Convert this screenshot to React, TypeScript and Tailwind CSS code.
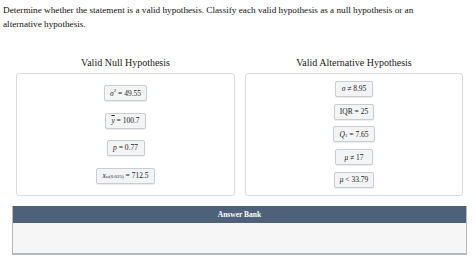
const serif = { fontFamily: '"Liberation Serif", "Times New Roman", serif' }

function Chip({ children, wide }: { children: React.ReactNode; wide?: boolean }) {
  return (
    <div
      className={`flex h-[16px] items-center justify-center rounded-[2px] border border-[#c9ccd0] bg-[#f3f4f6] px-[5px] text-[7.5px] leading-none text-[#222] shadow-[0_1px_1px_rgba(0,0,0,0.08)] ${wide ? 'min-w-[58px]' : 'min-w-[38px]'}`}
    >
      {children}
    </div>
  )
}

const nullItems = [
  <>
    <i>σ</i>
    <sup className="text-[5px]">2</sup>&nbsp;= 49.55
  </>,
  <>
    <i className="overline">y</i>&nbsp;= 100.7
  </>,
  <>
    <i>p</i>&nbsp;= 0.77
  </>,
  <>
    <i>x</i>
    <sub className="text-[5px]">ω(0.025)</sub>&nbsp;= 712.5
  </>,
]

const altItems = [
  <>
    <i>σ</i>&nbsp;≠ 8.95
  </>,
  <>IQR = 25</>,
  <>
    <i>Q</i>
    <sub className="text-[5px]">1</sub>&nbsp;= 7.65
  </>,
  <>
    <i>μ</i>&nbsp;≠ 17
  </>,
  <>
    <i>μ</i>&nbsp;&lt; 33.79
  </>,
]

export default function App() {
  return (
    <div className="h-[270px] w-[474px] bg-white text-[#1a1a1a]" style={serif}>
      <p className="max-w-[440px] px-[3px] pt-[3px] text-[9.2px] leading-[14px] text-[#111]">
        Determine whether the statement is a valid hypothesis. Classify each valid hypothesis as a null hypothesis or an
        alternative hypothesis.
      </p>

      <div className="ml-[16px] mt-[25px] flex gap-[10px]">
        <div className="flex w-[219px] flex-col">
          <div className="pb-[4px] text-center text-[10px] leading-[13px]">Valid Null Hypothesis</div>
          <div className="flex h-[123px] flex-col items-center justify-evenly rounded-[3px] border border-[#dcdcdc]">
            {nullItems.map((c, i) => (
              <Chip key={i} wide={i === 3}>{c}</Chip>
            ))}
          </div>
        </div>
        <div className="flex w-[218px] flex-col">
          <div className="pb-[4px] text-center text-[10px] leading-[13px]">Valid Alternative Hypothesis</div>
          <div className="flex h-[123px] flex-col items-center justify-evenly rounded-[3px] border border-[#dcdcdc]">
            {altItems.map((c, i) => (
              <Chip key={i}>{c}</Chip>
            ))}
          </div>
        </div>
      </div>

      <div className="ml-[12px] mt-[10px] w-[455px] border-x border-b-2 border-[#b5b9be]">
        <div className="flex h-[17px] items-center justify-center bg-[#4e6179] text-[7.5px] font-bold text-white">
          Answer Bank
        </div>
        <div className="h-[30px] bg-[#f6f6f6]" />
      </div>
    </div>
  )
}
